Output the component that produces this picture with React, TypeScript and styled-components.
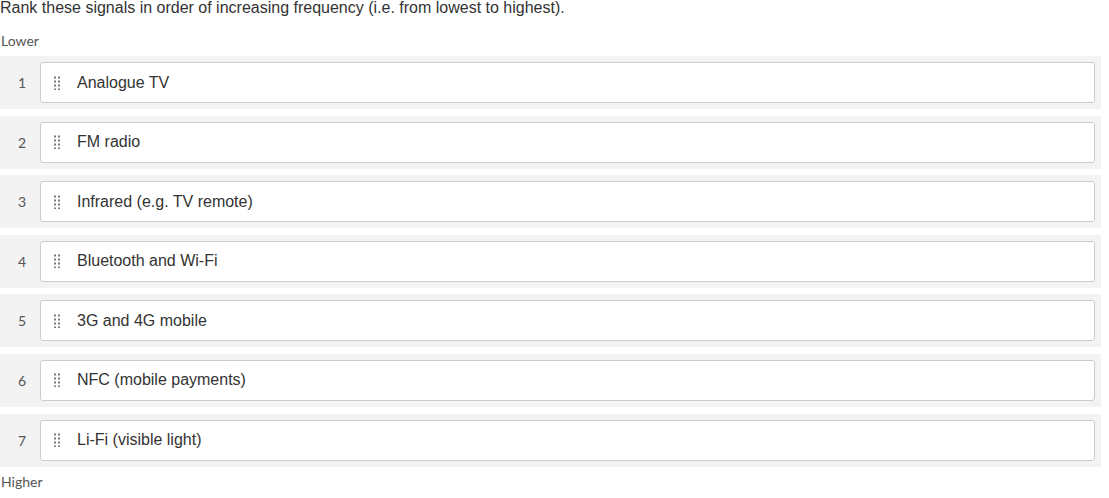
import React from 'react';
import styled, { createGlobalStyle } from 'styled-components';

const GlobalStyle = createGlobalStyle`
  html, body {
    margin: 0;
    padding: 0;
    background: #fff;
  }
`;

const Page = styled.div`
  width: 1101px;
  display: flex;
  flex-direction: column;
`;

const Question = styled.div`
  font-family: 'Liberation Sans', Arial, sans-serif;
  font-size: 16px;
  line-height: 18px;
  color: #333;
  margin-top: -1px;
`;

const EndLabel = styled.div<{ $top: number; $bottom: number }>`
  font-family: Lato, 'Open Sans', sans-serif;
  font-size: 14px;
  line-height: 16px;
  color: #555;
  margin: ${(p) => `${p.$top}px 0 ${p.$bottom}px 1px`};
`;

const List = styled.ol`
  list-style: none;
  margin: 0;
  padding: 0;
  display: flex;
  flex-direction: column;
  gap: 6.6px;
`;

const Row = styled.li`
  display: flex;
  align-items: center;
  background: #f3f3f3;
  height: 53px;
  padding: 0 6px 0 0;
  box-sizing: border-box;
`;

const Num = styled.span`
  width: 40px;
  flex: none;
  text-align: center;
  font-family: Lato, 'Open Sans', sans-serif;
  font-size: 14px;
  color: #555;
  padding-left: 4px;
  box-sizing: border-box;
`;

const Card = styled.div`
  flex: 1;
  height: 41px;
  display: flex;
  align-items: center;
  gap: 17px;
  background: #fff;
  border: 1px solid #c9cdd2;
  border-radius: 3px;
  box-sizing: border-box;
  padding-left: 13px;
  font-family: 'Liberation Sans', Arial, sans-serif;
  font-size: 16px;
  color: #333;
`;

const Handle = () => (
  <svg width="6" height="14" viewBox="0 0 6 14" aria-hidden>
    {[0, 1, 2, 3].map((r) =>
      [0, 1].map((c) => (
        <rect key={`${r}-${c}`} x={c * 4} y={r * 4 + 0.5} width="2" height="2" fill="#767a80" />
      ))
    )}
  </svg>
);

const items = [
  'Analogue TV',
  'FM radio',
  'Infrared (e.g. TV remote)',
  'Bluetooth and Wi-Fi',
  '3G and 4G mobile',
  'NFC (mobile payments)',
  'Li-Fi (visible light)',
];

export default function App() {
  return (
    <Page>
      <GlobalStyle />
      <Question>Rank these signals in order of increasing frequency (i.e. from lowest to highest).</Question>
      <EndLabel $top={16} $bottom={7}>Lower</EndLabel>
      <List>
        {items.map((item, i) => (
          <Row key={item}>
            <Num>{i + 1}</Num>
            <Card>
              <Handle />
              {item}
            </Card>
          </Row>
        ))}
      </List>
      <EndLabel $top={7} $bottom={0}>Higher</EndLabel>
    </Page>
  );
}
